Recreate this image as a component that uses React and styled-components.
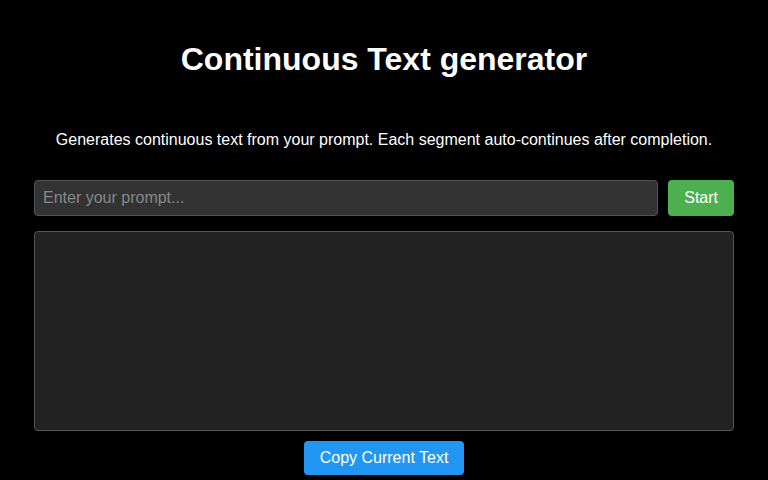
import React, { useState } from "react";
import styled, { createGlobalStyle } from "styled-components";

const GlobalStyle = createGlobalStyle`
  html, body {
    margin: 0;
    background: #000;
    color: #fff;
    font-family: "Liberation Sans", Arial, sans-serif;
  }
`;

const Page = styled.div`
  max-width: 700px;
  margin: 0 auto;
  padding: 20px 0;
  text-align: center;
`;

const Title = styled.h1`
  font-size: 32px;
  font-weight: bold;
  margin: 21px 0 0;
  line-height: 37px;
`;

const Intro = styled.p`
  font-size: 16px;
  line-height: 18px;
  margin: 53px 0 0;
`;

const PromptRow = styled.div`
  display: flex;
  gap: 10px;
  margin-top: 31px;
`;

const PromptInput = styled.input`
  flex: 1;
  height: 36px;
  box-sizing: border-box;
  padding: 0 8px;
  background: #333;
  color: #fff;
  border: 1px solid #555;
  border-radius: 4px;
  font-family: inherit;
  font-size: 16px;
  outline: none;

  &::placeholder {
    color: #888;
  }
`;

const Button = styled.button`
  height: ${(p) => p.$height}px;
  padding: 0 16px;
  border: none;
  border-radius: 4px;
  background: ${(p) => p.$bg};
  color: #fff;
  font-family: inherit;
  font-size: 16px;
  cursor: pointer;
`;

const Output = styled.div`
  height: 200px;
  box-sizing: border-box;
  margin-top: 15px;
  padding: 10px;
  background: #222;
  border: 1px solid #555;
  border-radius: 4px;
  text-align: left;
  white-space: pre-wrap;
  overflow-y: auto;
`;

const Footer = styled.div`
  margin-top: 10px;
`;

export default function App() {
  const [prompt, setPrompt] = useState("");
  const [text] = useState("");

  return (
    <>
      <GlobalStyle />
      <Page>
        <Title>Continuous Text generator</Title>
        <Intro>
          Generates continuous text from your prompt. Each segment auto-continues after completion.
        </Intro>
        <PromptRow>
          <PromptInput
            placeholder="Enter your prompt..."
            value={prompt}
            onChange={(e) => setPrompt(e.target.value)}
          />
          <Button $bg="#4caf50" $height={36}>Start</Button>
        </PromptRow>
        <Output>{text}</Output>
        <Footer>
          <Button $bg="#2196f3" $height={34}>Copy Current Text</Button>
        </Footer>
      </Page>
    </>
  );
}
